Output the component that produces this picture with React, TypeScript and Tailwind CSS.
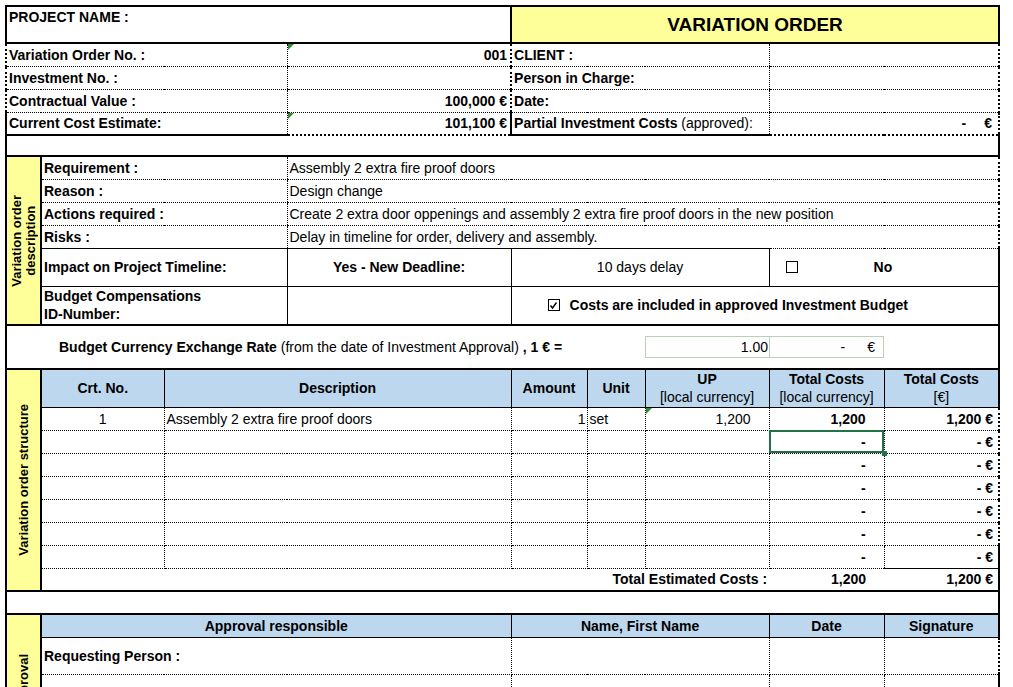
import React from "react";

const B = "border-black";
const dot = "border-b border-dotted border-b-black";

function Tri() {
  return <span className="absolute left-0 top-0 w-0 h-0 border-t-[6px] border-t-[#2e8b2e] border-r-[6px] border-r-transparent" />;
}

function Box({ checked }: { checked?: boolean }) {
  return (
    <span className="inline-flex items-center justify-center w-[12px] h-[12px] border-[1.5px] border-black align-middle bg-white">
      {checked && (
        <svg width="9" height="9" viewBox="0 0 9 9"><path d="M1.5 4.5 L3.5 7 L7.5 1.5" stroke="black" strokeWidth="1.4" fill="none" /></svg>
      )}
    </span>
  );
}

export default function App() {
  const widths = [35, 123, 123, 224, 76, 58, 124, 115, 115];
  const vdot = "border-r border-dotted border-r-black";
  const rows = [
    ["1", "Assembly 2 extra fire proof doors", "1", "set", "1,200", "1,200", "1,200 €"],
    ["", "", "", "", "", "-", "- €"],
    ["", "", "", "", "", "-", "- €"],
    ["", "", "", "", "", "-", "- €"],
    ["", "", "", "", "", "-", "- €"],
    ["", "", "", "", "", "-", "- €"],
    ["", "", "", "", "", "-", "- €"],
  ];
  return (
    <div className="w-[1013px] h-[687px] bg-white overflow-hidden pt-[5px] pl-[5px]" style={{ fontFamily: '"Liberation Sans", Arial, sans-serif' }}>
      <table className="table-fixed w-[994px] border-collapse text-[14px] text-black leading-[16px]">
        <colgroup>{widths.map((w, i) => <col key={i} style={{ width: w }} />)}</colgroup>
        <tbody>
          <tr className="h-[37px]">
            <td colSpan={4} className={`border-2 ${B} align-top font-bold px-[2px] pt-[2px]`}>PROJECT NAME :</td>
            <td colSpan={5} className={`border-2 ${B} bg-[#ffff99] text-center font-bold text-[19px]`}>VARIATION ORDER</td>
          </tr>
          {[
            ["Variation Order No. :", "001", "CLIENT :", "", true],
            ["Investment No. :", "", "Person in Charge:", "", false],
            ["Contractual Value :", "100,000 €", "Date:", "", false],
            ["Current Cost Estimate:", "101,100 €", "Partial Investment Costs", "-", true],
          ].map((r, i) => (
            <tr key={i} className="h-[23px]">
              <td colSpan={3} className={`border-l-2 ${B} ${i < 3 ? dot : "border-b-2 border-b-black"} font-bold px-[2px]`}>{r[0]}</td>
              <td className={`relative ${i < 3 ? dot : "border-b-2 border-b-black"} border-l border-dotted border-l-black text-right font-bold px-[3px]`}>{r[4] && <Tri />}{r[1]}</td>
              <td colSpan={3} className={`border-l-2 ${B} ${i < 3 ? dot : "border-b-2 border-b-black"} font-bold px-[2px]`}>
                {r[2]}{i === 3 && <span className="font-normal"> (approved):</span>}
              </td>
              <td colSpan={2} className={`border-l border-dotted border-l-black border-r-2 border-r-black ${i < 3 ? dot : "border-b-2 border-b-black"} font-bold pr-[6px]`}>
                {r[3] && <div className="flex justify-end gap-[18px]"><span>-</span><span>€</span></div>}
              </td>
            </tr>
          ))}
          <tr className="h-[21px]"><td colSpan={9} className={`border-x-2 ${B} border-b-2`}></td></tr>
          <tr className="h-[23px]">
            <td rowSpan={6} className={`border-2 ${B} bg-[#ffff99] p-0`}>
              <div className="flex items-center justify-center h-full">
                <span className="font-bold text-[13px] leading-[14px] text-center [writing-mode:vertical-rl] rotate-180">Variation order<br />description</span>
              </div>
            </td>
            <td colSpan={2} className={`${dot} font-bold px-[2px]`}>Requirement :</td>
            <td colSpan={6} className={`${dot} border-l border-dotted border-l-black border-r-2 border-r-black px-[2px]`}>Assembly 2 extra fire proof doors</td>
          </tr>
          {[["Reason :", "Design change"], ["Actions required :", "Create 2 extra door oppenings and assembly 2 extra fire proof doors in the new position"], ["Risks :", "Delay in timeline for order, delivery and assembly."]].map((r, i) => (
            <tr key={i} className="h-[23px]">
              <td colSpan={2} className={`${i < 2 ? dot : "border-b border-b-black"} font-bold px-[2px]`}>{r[0]}</td>
              <td colSpan={6} className={`${i < 2 ? dot : "border-b border-b-black"} border-l border-dotted border-l-black border-r-2 border-r-black px-[2px]`}>{r[1]}</td>
            </tr>
          ))}
          <tr className="h-[38px]">
            <td colSpan={2} className="border-b border-b-black font-bold px-[2px]">Impact on Project Timeline:</td>
            <td className="border border-black font-bold text-center">Yes - New Deadline:</td>
            <td colSpan={3} className="border border-black text-center">10 days delay</td>
            <td colSpan={2} className={`border-b border-b-black border-r-2 border-r-black`}>
              <div className="flex items-center pl-[16px]"><Box /><span className="font-bold ml-[76px]">No</span></div>
            </td>
          </tr>
          <tr className="h-[39px]">
            <td colSpan={2} className="border-b-2 border-b-black font-bold px-[2px] leading-[18px]">Budget Compensations<br />ID-Number:</td>
            <td className="border-b-2 border-b-black border-x border-x-black"></td>
            <td colSpan={5} className="border-b-2 border-b-black border-r-2 border-r-black">
              <div className="flex items-center pl-[36px] gap-[10px]"><Box checked /><span className="font-bold">Costs are included in approved Investment Budget</span></div>
            </td>
          </tr>
          <tr className="h-[42px]">
            <td colSpan={6} className={`border-l-2 border-b-2 ${B} font-bold pl-[52px]`}>Budget Currency Exchange Rate <span className="font-normal">(from the date of Investment Approval)</span> , 1 € =</td>
            <td className="py-[10px] px-0 border-b-2 border-b-black"><div className="h-[22px] border border-[#b8cfb8] border-r-0 text-right pr-[1px] leading-[20px]">1.00</div></td>
            <td className="py-[10px] px-0 border-b-2 border-b-black"><div className="h-[22px] border border-[#b8cfb8] leading-[20px] flex justify-end pr-[8px] gap-[22px]"><span>-</span><span>€</span></div></td>
            <td className={`border-r-2 border-b-2 ${B}`}></td>
          </tr>
          <tr className="h-[38px] bg-[#bdd7ee]">
            <td rowSpan={9} className={`border-2 ${B} bg-[#ffff99] p-0`}>
              <div className="flex items-center justify-center h-full">
                <span className="font-bold text-[13px] [writing-mode:vertical-rl] rotate-180">Variation order structure</span>
              </div>
            </td>
            <td className="border border-black font-bold text-center">Crt. No.</td>
            <td colSpan={2} className="border border-black font-bold text-center">Description</td>
            <td className="border border-black font-bold text-center">Amount</td>
            <td className="border border-black font-bold text-center">Unit</td>
            <td className="border border-black text-center leading-[18px]"><b>UP</b><br />[local currency]</td>
            <td className="border border-black text-center leading-[18px]"><b>Total Costs</b><br />[local currency]</td>
            <td className="border border-black border-r-2 text-center leading-[18px]"><b>Total Costs</b><br />[€]</td>
          </tr>
          {rows.map((r, i) => {
            const bb = i < 6 ? dot : "border-b border-b-black";
            return (
              <tr key={i} className="h-[23px]">
                <td className={`${bb} ${vdot} text-center`}>{r[0]}</td>
                <td colSpan={2} className={`${bb} ${vdot} px-[2px]`}>{r[1]}</td>
                <td className={`${bb} ${vdot} text-right pr-[1px]`}>{r[2]}</td>
                <td className={`${bb} ${vdot} px-[2px]`}>{r[3]}</td>
                <td className={`relative ${bb} ${vdot} text-right pr-[18px]`}>{i === 0 && <Tri />}{r[4]}</td>
                <td className={`relative ${bb} ${vdot} text-right font-bold pr-[18px] ${i === 1 ? "outline-2 outline-[#217346] -outline-offset-2" : ""}`}>{r[5]}{i === 1 && <span className="absolute right-[-3px] bottom-[-3px] w-[5px] h-[5px] bg-[#217346]" />}</td>
                <td className={`${bb} border-r-2 border-r-black text-right font-bold pr-[5px]`}>{r[6]}</td>
              </tr>
            );
          })}
          <tr className="h-[23px]">
            <td colSpan={6} className="border-b-2 border-b-black font-bold text-right pr-[2px]">Total Estimated Costs :</td>
            <td className="border-b-2 border-b-black font-bold text-right pr-[18px]">1,200</td>
            <td className="border-b-2 border-b-black border-r-2 border-r-black font-bold text-right pr-[5px]">1,200 €</td>
          </tr>
          <tr className="h-[23px]"><td colSpan={9} className={`border-x-2 ${B} border-b-2`}></td></tr>
          <tr className="h-[23px] bg-[#bdd7ee]">
            <td rowSpan={3} className={`border-2 ${B} bg-[#ffff99] p-0 align-bottom`}>
              <div className="flex justify-center"><span className="font-bold text-[13px] [writing-mode:vertical-rl] rotate-180">Approval</span></div>
            </td>
            <td colSpan={3} className="border border-black font-bold text-center">Approval responsible</td>
            <td colSpan={3} className="border border-black font-bold text-center">Name, First Name</td>
            <td className="border border-black font-bold text-center">Date</td>
            <td className="border border-black border-r-2 font-bold text-center">Signature</td>
          </tr>
          <tr className="h-[37px]">
            <td colSpan={3} className={`${dot} ${vdot} font-bold px-[2px]`}>Requesting Person :</td>
            <td colSpan={3} className={`${dot} ${vdot}`}></td>
            <td className={`${dot} ${vdot}`}></td>
            <td className={`${dot} border-r-2 border-r-black`}></td>
          </tr>
          <tr className="h-[37px]">
            <td colSpan={3} className={`${vdot} font-bold px-[2px] align-top pt-[10px]`}>Project Manager Investment / Client :</td>
            <td colSpan={3} className={vdot}></td>
            <td className={vdot}></td>
            <td className="border-r-2 border-r-black"></td>
          </tr>
        </tbody>
      </table>
    </div>
  );
}
